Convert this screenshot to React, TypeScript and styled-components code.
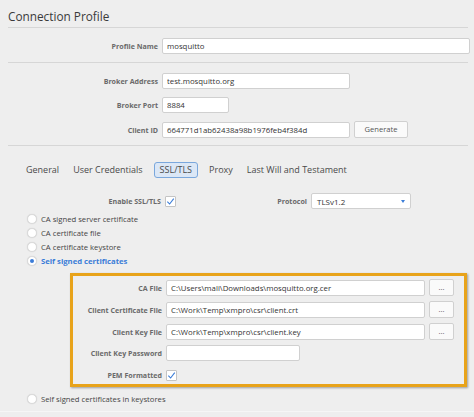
import React from "react";
import styled, { createGlobalStyle } from "styled-components";

const GlobalStyle = createGlobalStyle`
  body {
    margin: 0;
    background: #eeeeee;
    font-family: "Open Sans", "Noto Sans", sans-serif;
    color: #444;
  }
`;

const Page = styled.div`
  width: 460px;
  padding: 0 6px 0 8px;
  border-bottom: 1px solid #f6f6f6;
  padding-bottom: 5px;
`;

const Title = styled.h2`
  margin: 0;
  padding: 8px 0 3px;
  font-size: 11.8px;
  line-height: 16px;
  font-weight: 400;
  color: #3a3a3a;
  border-bottom: 1px solid #d6d6d6;
`;

const Section = styled.div`
  display: flex;
  flex-direction: column;
  gap: 8px;
  padding: 10px 0 8px;
  border-bottom: 1px solid #d6d6d6;
`;

const Row = styled.div<{ $labelWidth?: number }>`
  display: grid;
  grid-template-columns: ${(p) => p.$labelWidth ?? 150}px auto auto 1fr;
  column-gap: 4px;
  align-items: center;
  height: 16px;
`;

const Label = styled.label`
  text-align: right;
  font-size: 7.1px;
  font-weight: 700;
  color: #6a6a6a;
  white-space: nowrap;
`;

const Input = styled.input<{ $width: number }>`
  box-sizing: border-box;
  width: ${(p) => p.$width}px;
  height: 16px;
  padding: 0 4px;
  border: 1px solid #d0d0d0;
  border-radius: 2px;
  background: #fff;
  font-family: inherit;
  font-size: 7.8px;
  color: #333;
  outline: none;
`;

const Button = styled.button<{ $width: number }>`
  box-sizing: border-box;
  width: ${(p) => p.$width}px;
  height: 17px;
  padding: 0;
  border: 1px solid #d0d0d0;
  border-radius: 2px;
  background: #fafafa;
  font-family: inherit;
  font-size: 7.6px;
  color: #555;
  line-height: 1;
`;

const Tabs = styled.div`
  display: flex;
  align-items: center;
  gap: 8px;
  margin: 16px 0 0 15px;
  height: 16px;
`;

const Tab = styled.div<{ $active?: boolean }>`
  box-sizing: border-box;
  height: 16px;
  padding: 0 ${(p) => (p.$active ? 5 : 2)}px;
  line-height: 14px;
  font-size: 9px;
  color: #4a4a4a;
  border: 1px solid ${(p) => (p.$active ? "#7aa7dc" : "transparent")};
  border-radius: 3px;
  background: ${(p) => (p.$active ? "#dbe7f6" : "transparent")};
`;

const OptionsRow = styled.div`
  display: flex;
  align-items: center;
  height: 16px;
  margin-top: 15px;
`;

const Check = styled.span`
  box-sizing: border-box;
  display: inline-flex;
  align-items: center;
  justify-content: center;
  width: 11px;
  height: 11px;
  border: 1px solid #c4c4c4;
  border-radius: 1px;
  background: #fff;
`;

const InlineLabel = styled(Label)<{ $width: number }>`
  width: ${(p) => p.$width}px;
  margin-right: 4px;
`;

const Select = styled.div`
  box-sizing: border-box;
  display: flex;
  align-items: center;
  justify-content: space-between;
  width: 100px;
  height: 16px;
  padding: 0 5px;
  border: 1px solid #d0d0d0;
  border-radius: 2px;
  background: #fff;
  font-size: 8px;
  color: #333;
`;

const Caret = styled.span`
  width: 0;
  height: 0;
  border-left: 2.5px solid transparent;
  border-right: 2.5px solid transparent;
  border-top: 3px solid #3b7dd8;
`;

const RadioList = styled.div`
  display: flex;
  flex-direction: column;
  margin: 3px 0 0 19px;
`;

const RadioRow = styled.div<{ $selected?: boolean }>`
  display: flex;
  align-items: center;
  gap: 4px;
  height: 14px;
  font-size: 7.7px;
  font-weight: ${(p) => (p.$selected ? 700 : 400)};
  color: ${(p) => (p.$selected ? "#3b7dd8" : "#444")};
`;

const RadioDot = styled.span<{ $selected?: boolean }>`
  box-sizing: border-box;
  display: inline-flex;
  align-items: center;
  justify-content: center;
  width: 10px;
  height: 10px;
  border-radius: 50%;
  border: 1px solid #dadada;
  background: #fff;
  box-shadow: 0 0 1px rgba(0, 0, 0, 0.15);

  &::after {
    content: "";
    display: ${(p) => (p.$selected ? "block" : "none")};
    width: 4px;
    height: 4px;
    border-radius: 50%;
    background: #3b7dd8;
  }
`;

const Highlight = styled.div`
  box-sizing: border-box;
  display: flex;
  flex-direction: column;
  gap: 6px;
  width: 397px;
  margin: 5px 0 0 62px;
  padding: 3px 0 1px;
  border: 3px solid #e8a31a;
  box-shadow: 1px 1px 2px rgba(0, 0, 0, 0.35);
`;

const BottomRadio = styled(RadioList)`
  margin-top: 5px;
`;

const CheckMark = () => (
  <svg width="9" height="9" viewBox="0 0 10 10">
    <path d="M1.5 5.2 L4 7.8 L8.6 1.8" fill="none" stroke="#3b7dd8" strokeWidth="1.2" />
  </svg>
);

const files = [
  { label: "CA File", value: "C:\\Users\\mali\\Downloads\\mosquitto.org.cer" },
  { label: "Client Certificate File", value: "C:\\Work\\Temp\\xmpro\\csr\\client.crt" },
  { label: "Client Key File", value: "C:\\Work\\Temp\\xmpro\\csr\\client.key" },
];

const radios = [
  "CA signed server certificate",
  "CA certificate file",
  "CA certificate keystore",
];

const App = (): JSX.Element => {
  return (
    <>
      <GlobalStyle />
      <Page>
        <Title>Connection Profile</Title>
        <Section>
          <Row>
            <Label>Profile Name</Label>
            <Input $width={308} defaultValue="mosquitto" />
          </Row>
        </Section>
        <Section>
          <Row>
            <Label>Broker Address</Label>
            <Input $width={188} defaultValue="test.mosquitto.org" />
          </Row>
          <Row>
            <Label>Broker Port</Label>
            <Input $width={67} defaultValue="8884" />
          </Row>
          <Row>
            <Label>Client ID</Label>
            <Input $width={188} defaultValue="664771d1ab62438a98b1976feb4f384d" />
            <Button $width={54}>Generate</Button>
          </Row>
        </Section>

        <Tabs>
          <Tab>General</Tab>
          <Tab>User Credentials</Tab>
          <Tab $active>SSL/TLS</Tab>
          <Tab>Proxy</Tab>
          <Tab>Last Will and Testament</Tab>
        </Tabs>

        <OptionsRow>
          <InlineLabel $width={153}>Enable SSL/TLS</InlineLabel>
          <Check>
            <CheckMark />
          </Check>
          <InlineLabel $width={131}>Protocol</InlineLabel>
          <Select>
            TLSv1.2
            <Caret />
          </Select>
        </OptionsRow>

        <RadioList>
          {radios.map((r) => (
            <RadioRow key={r}>
              <RadioDot />
              {r}
            </RadioRow>
          ))}
          <RadioRow $selected>
            <RadioDot $selected />
            Self signed certificates
          </RadioRow>
        </RadioList>

        <Highlight>
          {files.map((f) => (
            <Row key={f.label} $labelWidth={89}>
              <Label>{f.label}</Label>
              <Input $width={259} defaultValue={f.value} />
              <Button $width={25}>...</Button>
            </Row>
          ))}
          <Row $labelWidth={89}>
            <Label>Client Key Password</Label>
            <Input $width={134} type="text" defaultValue="" />
          </Row>
          <Row $labelWidth={89}>
            <Label>PEM Formatted</Label>
            <Check>
              <CheckMark />
            </Check>
          </Row>
        </Highlight>

        <BottomRadio>
          <RadioRow>
            <RadioDot />
            Self signed certificates in keystores
          </RadioRow>
        </BottomRadio>
      </Page>
    </>
  );
};

export default App;
